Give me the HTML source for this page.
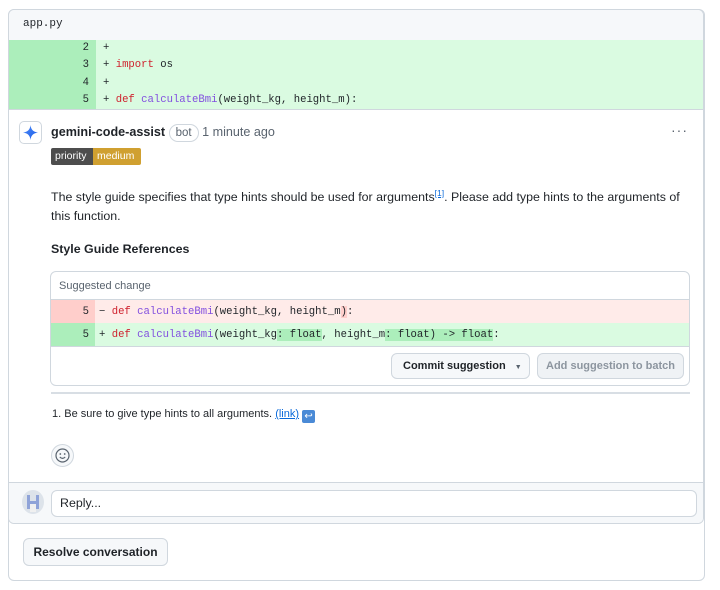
<!DOCTYPE html>
<html><head><meta charset="utf-8"><style>
*{box-sizing:border-box;margin:0;padding:0}
body{width:720px;height:590px;background:#fff;font-family:"Liberation Sans",sans-serif;color:#1f2328;position:relative;overflow:hidden}
.a{position:absolute}
.mono{font-family:"Liberation Mono",monospace;font-size:10.6px}
.kw{color:#cf222e}.fn{color:#8250df}
</style></head><body>
<div class="a" style="left:8px;top:9px;width:697px;height:572px;border:1px solid #d0d7de;border-radius:6px"></div>
<div class="a" style="left:8px;top:9px;width:696px;height:515px;border:1px solid #d0d7de;border-radius:6px;overflow:hidden">
  <div class="a mono" style="left:0;top:0;width:100%;height:30px;background:#f6f8fa;padding:8px 14px;font-size:11px">app.py</div>
  <div class="a" style="left:0;top:30px;width:87px;height:69px;background:#aceebb"></div>
  <div class="a" style="left:87px;top:30px;width:610px;height:69px;background:#dafbe1"></div>
  <div class="a mono" style="left:0;top:30px;width:100%;line-height:17.3px;white-space:nowrap">
    <div><span style="display:inline-block;width:80px;text-align:right">2</span><span style="padding-left:14px">+</span></div>
    <div><span style="display:inline-block;width:80px;text-align:right">3</span><span style="padding-left:14px">+ <span class="kw">import</span> os</span></div>
    <div><span style="display:inline-block;width:80px;text-align:right">4</span><span style="padding-left:14px">+</span></div>
    <div><span style="display:inline-block;width:80px;text-align:right">5</span><span style="padding-left:14px">+ <span class="kw">def</span> <span class="fn">calculateBmi</span>(weight_kg, height_m):</span></div>
  </div>
  <div class="a" style="left:0;top:99px;width:100%;height:1px;background:#d0d7de"></div>
  <div class="a" style="left:0;top:472px;width:100%;height:43px;background:#f6f8fa;border-top:1px solid #d0d7de"></div>
</div>
<div class="a" style="left:19px;top:121px;width:23px;height:23px;border:1px solid #d0d7de;border-radius:5px;background:#fff">
<svg width="21" height="21" viewBox="0 0 21 21" style="position:absolute;left:0;top:0"><defs><linearGradient id="g" x1="0" y1="0" x2="1" y2="1"><stop offset="0" stop-color="#4e8cf7"/><stop offset="1" stop-color="#1a5be8"/></linearGradient></defs><path d="M10.5 3 C11 7.5 13 9.8 18 10.5 C13 11.2 11 13.5 10.5 18 C10 13.5 8 11.2 3 10.5 C8 9.8 10 7.5 10.5 3Z" fill="url(#g)"/></svg></div>
<div class="a" style="left:51px;top:124px;font-size:12.6px;white-space:nowrap"><b>gemini-code-assist</b> <span style="display:inline-block;border:1px solid #d0d7de;border-radius:10px;padding:0 6px;font-size:11.5px;color:#59636e;line-height:16px">bot</span> <span style="color:#59636e">1 minute ago</span></div>
<div class="a" style="left:671px;top:122px;color:#59636e;font-size:14px;letter-spacing:1px">···</div>
<div class="a" style="left:51px;top:148px;height:17px;font-size:10.5px;line-height:17px;color:#fff;white-space:nowrap;border-radius:2px;overflow:hidden;display:flex"><span style="display:block;background:#4d4d4d;padding:0 4px;width:42px">priority</span><span style="display:block;background:#d0a030;padding:0 4px;width:48px">medium</span></div>
<div class="a" style="left:51px;top:184px;width:650px;font-size:12.4px;line-height:19px">The style guide specifies that type hints should be used for arguments<span style="font-size:8.5px;color:#0969da;text-decoration:underline;vertical-align:5px">[1]</span>. Please add type hints to the arguments of this function.</div>
<div class="a" style="left:51px;top:242px;font-size:12.4px;font-weight:bold">Style Guide References</div>
<div class="a" style="left:50px;top:271px;width:640px;height:115px;border:1px solid #d0d7de;border-radius:6px;overflow:hidden">
  <div class="a" style="left:8px;top:8px;font-size:11px;color:#59636e">Suggested change</div>
  <div class="a" style="left:0;top:27px;width:100%;height:1px;background:#d0d7de"></div>
  <div class="a" style="left:0;top:28px;width:44px;height:23px;background:#ffcecb"></div>
  <div class="a" style="left:44px;top:28px;width:600px;height:23px;background:#ffebe9"></div>
  <div class="a" style="left:0;top:51px;width:44px;height:23px;background:#aceebb"></div>
  <div class="a" style="left:44px;top:51px;width:600px;height:23px;background:#dafbe1"></div>
  <div class="a" style="left:0;top:74px;width:100%;height:1px;background:#d0d7de"></div>
  <div class="a mono" style="left:0;top:29px;line-height:23px;white-space:nowrap">
    <div><span style="display:inline-block;width:38px;text-align:right">5</span><span style="padding-left:10px">− <span class="kw">def</span> <span class="fn">calculateBmi</span>(weight_kg, height_m<span style="background:#ffcecb">)</span>:</span></div>
    <div><span style="display:inline-block;width:38px;text-align:right">5</span><span style="padding-left:10px">+ <span class="kw">def</span> <span class="fn">calculateBmi</span>(weight_kg<span style="background:#aceebb">: float</span>, height_m<span style="background:#aceebb">: float) -&gt; float</span>:</span></div>
  </div>
  <div class="a" style="left:340px;top:81px;width:139px;height:26px;border:1px solid #d0d7de;border-radius:6px;background:#f6f8fa;font-size:11px;font-weight:bold;line-height:24px;padding-left:11px;white-space:nowrap">Commit suggestion <span style="font-size:7px;margin-left:6px;color:#59636e">▼</span></div>
  <div class="a" style="left:486px;top:81px;width:147px;height:26px;border:1px solid #d0d7de;border-radius:6px;background:#eff2f5;font-size:11px;font-weight:bold;line-height:24px;text-align:center;color:#8c959f;white-space:nowrap">Add suggestion to batch</div>
</div>
<div class="a" style="left:51px;top:392px;width:639px;height:2px;background:#d8dee4"></div>
<div class="a" style="left:52px;top:408px;font-size:11px;white-space:nowrap">1. Be sure to give type hints to all arguments. <span style="color:#0969da;text-decoration:underline">(link)</span> <span style="display:inline-block;width:13px;height:13px;background:#4a8ad6;border-radius:2px;color:#fff;font-size:10px;line-height:13px;text-align:center;vertical-align:-2px">↩</span></div>
<div class="a" style="left:51px;top:444px;width:23px;height:23px;border:1px solid #d0d7de;border-radius:50%;background:#f6f8fa">
<svg width="21" height="21" viewBox="0 0 21 21" class="a" style="left:0;top:0"><circle cx="10.5" cy="10.5" r="6.5" fill="none" stroke="#59636e" stroke-width="1.2"/><circle cx="8.3" cy="9" r=".9" fill="#59636e"/><circle cx="12.7" cy="9" r=".9" fill="#59636e"/><path d="M7.8 12 Q10.5 14.8 13.2 12" fill="none" stroke="#59636e" stroke-width="1.2"/></svg></div>
<div class="a" style="left:22px;top:490px;width:22px;height:24px;border-radius:50%;background:#dde3ea;overflow:hidden">
<svg width="22" height="24" viewBox="0 0 22 24"><path d="M5 5h3v6h6V5h3v14h-3v-5h-6v5H5z" fill="#8fa3d8"/><rect x="8" y="14" width="6" height="8" fill="#f0f0f0"/></svg></div>
<div class="a" style="left:51px;top:490px;width:646px;height:27px;border:1px solid #d0d7de;border-radius:6px;background:#fff;font-size:12.4px;line-height:25px;padding-left:8px;color:#1f2328">Reply...</div>
<div class="a" style="left:23px;top:538px;width:145px;height:28px;border:1px solid #d0d7de;border-radius:6px;background:#f6f8fa;font-size:12px;font-weight:bold;line-height:26px;text-align:center">Resolve conversation</div>
</body></html>
